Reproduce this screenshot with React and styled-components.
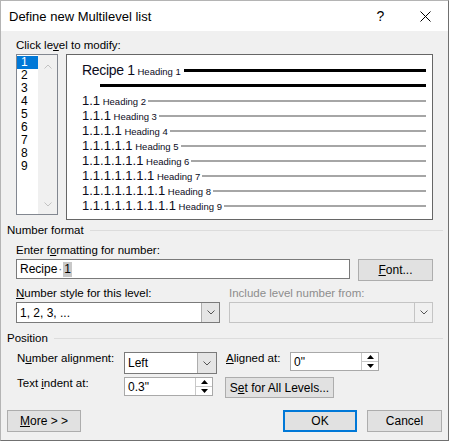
import React from "react";
import styled, { createGlobalStyle } from "styled-components";

const GlobalStyle = createGlobalStyle`
  body {
    margin: 0;
    font-family: "Liberation Sans", Arial, sans-serif;
    font-size: 11.5px;
    color: #000;
  }
`;

const levels = ["1", "2", "3", "4", "5", "6", "7", "8", "9"];

function Chevron({ down = true, color = "#555" }) {
  return (
    <svg width="8" height="5" viewBox="0 0 8 5">
      <polyline
        points={down ? "0.5,0.5 4,4 7.5,0.5" : "0.5,4.5 4,1 7.5,4.5"}
        fill="none"
        stroke={color}
        strokeWidth="1"
      />
    </svg>
  );
}

function Spin({ value, width }) {
  return (
    <SpinBox $width={width}>
      <SpinText>{value}</SpinText>
      <SpinButtons>
        <SpinHalf>
          <svg width="7" height="4" viewBox="0 0 7 4">
            <polygon points="0,4 3.5,0 7,4" fill="#000" />
          </svg>
        </SpinHalf>
        <SpinHalf>
          <svg width="7" height="4" viewBox="0 0 7 4">
            <polygon points="0,0 3.5,4 7,0" fill="#000" />
          </svg>
        </SpinHalf>
      </SpinButtons>
    </SpinBox>
  );
}

function App() {
  const rows = [];
  for (let i = 2; i <= 9; i++) {
    rows.push({ num: Array(i).fill("1").join("."), head: "Heading " + i });
  }

  return (
    <>
      <GlobalStyle />
      <Window>
        <TitleBar>
          <Title>Define new Multilevel list</Title>
          <TitleButton>?</TitleButton>
          <TitleButton>
            <svg width="11" height="11" viewBox="0 0 11 11">
              <path d="M0.5 0.5 L10.5 10.5 M10.5 0.5 L0.5 10.5" stroke="#000" strokeWidth="1" />
            </svg>
          </TitleButton>
        </TitleBar>

        <Body>
          <Label>
            Click le<u>v</u>el to modify:
          </Label>
          <TopRow>
            <ListBox>
              <Items>
                {levels.map((l, i) => (
                  <Item key={l} $selected={i === 0}>
                    {l}
                  </Item>
                ))}
              </Items>
              <ScrollTrack>
                <Chevron down={false} color="#c2c2c2" />
                <Chevron color="#c2c2c2" />
              </ScrollTrack>
            </ListBox>
            <Preview>
              <FirstRow>
                <span>
                  <BigNum>Recipe 1</BigNum>
                  <Head> Heading 1</Head>
                </span>
                <Rule $dark />
              </FirstRow>
              <SecondRow>
                <Rule $dark />
              </SecondRow>
              <Levels>
                {rows.map((r) => (
                  <LevelRow key={r.head}>
                    <span>
                      <Num>{r.num}</Num>
                      <Head> {r.head}</Head>
                    </span>
                    <Rule />
                  </LevelRow>
                ))}
              </Levels>
            </Preview>
          </TopRow>

          <GroupHeader $top={3}>
            <span>Number format</span>
            <GroupLine />
          </GroupHeader>
          <Label $top={6}>
            Enter f<u>o</u>rmatting for number:
          </Label>
          <InputRow>
            <TextInput>
              Recipe<Dot>·</Dot>
              <Field>1</Field>
            </TextInput>
            <Button $width={75} $height={22}>
              <u>F</u>ont...
            </Button>
          </InputRow>
          <StyleGrid>
            <GridLabel>
              <u>N</u>umber style for this level:
            </GridLabel>
            <GridLabel $disabled>Include level number from:</GridLabel>
            <Select $width={204}>
              <SelectText>1, 2, 3, ...</SelectText>
              <SelectArrow>
                <Chevron />
              </SelectArrow>
            </Select>
            <Select $width={204} $disabled>
              <SelectText />
              <SelectArrow $disabled>
                <Chevron />
              </SelectArrow>
            </Select>
          </StyleGrid>

          <GroupHeader $top={8}>
            <span>Position</span>
            <GroupLine />
          </GroupHeader>
          <PosRow $top={7}>
            <PosLabel $width={108}>
              N<u>u</u>mber alignment:
            </PosLabel>
            <Select $width={93} $height={22}>
              <SelectText>Left</SelectText>
              <SelectArrow $width={18}>
                <Chevron />
              </SelectArrow>
            </Select>
            <PosLabel $width={65} $left={8}>
              <u>A</u>ligned at:
            </PosLabel>
            <Spin value={'0"'} width={89} />
          </PosRow>
          <PosRow $top={3}>
            <PosLabel $width={108}>
              Text <u>i</u>ndent at:
            </PosLabel>
            <Spin value={'0.3"'} width={89} />
            <Button $width={109} $height={21} $left={12}>
              S<u>e</u>t for All Levels...
            </Button>
          </PosRow>
        </Body>

        <Footer>
          <Button $width={74} $height={22}>
            <u>M</u>ore &gt; &gt;
          </Button>
          <FooterRight>
            <Button $width={74} $height={22} $primary>
              OK
            </Button>
            <Button $width={75} $height={22}>
              Cancel
            </Button>
          </FooterRight>
        </Footer>
      </Window>
    </>
  );
}

export default App;

const Window = styled.div`
  width: 449px;
  height: 441px;
  box-sizing: border-box;
  border: 1px solid #b4b4b4;
  border-right-color: #707070;
  border-bottom-color: #707070;
  background: #f0f0f0;
  display: flex;
  flex-direction: column;
`;

const TitleBar = styled.div`
  height: 30px;
  background: #fff;
  display: flex;
  align-items: center;
  padding-left: 8px;
`;

const Title = styled.div`
  flex: 1;
  font-size: 13px;
  padding-top: 1px;
`;

const TitleButton = styled.div`
  width: 45px;
  height: 30px;
  display: flex;
  align-items: center;
  justify-content: center;
  font-size: 14px;
`;

const Body = styled.div`
  padding: 7px 5px 0 6px;
  display: flex;
  flex-direction: column;
`;

const Label = styled.div`
  height: 14px;
  line-height: 14px;
  margin-left: 9px;
  margin-top: ${(p) => p.$top || 0}px;
`;

const TopRow = styled.div`
  display: flex;
  align-items: flex-start;
  gap: 8px;
  margin: 2px 0 0 9px;
`;

const ListBox = styled.div`
  width: 42px;
  height: 161px;
  box-sizing: border-box;
  border: 1px solid #828790;
  background: #fff;
  display: flex;
`;

const Items = styled.div`
  width: 21px;
  padding-top: 1px;
`;

const Item = styled.div`
  height: 13px;
  line-height: 13px;
  padding-left: 4px;
  font-size: 12px;
  background: ${(p) => (p.$selected ? "#0078d7" : "transparent")};
  color: ${(p) => (p.$selected ? "#fff" : "#000")};
`;

const ScrollTrack = styled.div`
  flex: 1;
  background: #f0f0f0;
  display: flex;
  flex-direction: column;
  align-items: center;
  justify-content: space-between;
  padding: 9px 0 7px;
`;

const Preview = styled.div`
  width: 367px;
  height: 166px;
  box-sizing: border-box;
  border: 1px solid #666;
  background: #fff;
  padding: 5px 6px 0 15px;
  color: #0c0c1c;
`;

const FirstRow = styled.div`
  height: 20px;
  display: flex;
  align-items: center;
  white-space: nowrap;
`;

const SecondRow = styled.div`
  height: 10px;
  display: flex;
  align-items: center;
  padding-left: 15px;
`;

const Levels = styled.div`
  margin-top: 3px;
`;

const LevelRow = styled.div`
  height: 15px;
  display: flex;
  align-items: center;
  white-space: nowrap;
`;

const BigNum = styled.span`
  font-size: 14px;
  letter-spacing: -0.3px;
`;

const Num = styled.span`
  font-size: 13px;
`;

const Head = styled.span`
  font-size: 9.5px;
`;

const Rule = styled.div`
  flex: 1;
  height: ${(p) => (p.$dark ? 3 : 2)}px;
  background: ${(p) => (p.$dark ? "#000" : "#a6a6a6")};
  margin-left: ${(p) => (p.$dark ? 3 : 2)}px;
  margin-top: 1px;
`;

const GroupHeader = styled.div`
  height: 14px;
  line-height: 14px;
  display: flex;
  align-items: center;
  margin-top: ${(p) => p.$top}px;
`;

const GroupLine = styled.div`
  flex: 1;
  height: 1px;
  background: #dcdcdc;
  margin-left: 6px;
`;

const InputRow = styled.div`
  display: flex;
  align-items: flex-start;
  gap: 8px;
  margin: 2px 0 0 9px;
`;

const TextInput = styled.div`
  width: 334px;
  height: 20px;
  box-sizing: border-box;
  border: 1px solid #7a7a7a;
  background: #fff;
  display: flex;
  align-items: center;
  padding-left: 3px;
  font-size: 12px;
`;

const Dot = styled.span`
  color: #666;
  padding: 0 1px;
`;

const Field = styled.span`
  background: #c8c8c8;
  padding: 0 1px;
  line-height: 15px;
`;

const Button = styled.div`
  width: ${(p) => p.$width}px;
  height: ${(p) => p.$height}px;
  margin-left: ${(p) => p.$left || 0}px;
  box-sizing: border-box;
  background: #e1e1e1;
  border: ${(p) => (p.$primary ? "2px solid #0078d7" : "1px solid #adadad")};
  display: flex;
  align-items: center;
  justify-content: center;
  font-size: 12px;
  flex-shrink: 0;
`;

const StyleGrid = styled.div`
  display: grid;
  grid-template-columns: 204px 204px;
  column-gap: 9px;
  row-gap: 2px;
  margin: 5px 0 0 9px;
`;

const GridLabel = styled.div`
  height: 14px;
  line-height: 14px;
  color: ${(p) => (p.$disabled ? "#8d8d8d" : "#000")};
`;

const Select = styled.div`
  width: ${(p) => p.$width}px;
  height: ${(p) => p.$height || 21}px;
  box-sizing: border-box;
  border: 1px solid ${(p) => (p.$disabled ? "#c4c4c4" : "#7a7a7a")};
  background: ${(p) => (p.$disabled ? "#f0f0f0" : "#fff")};
  display: flex;
  flex-shrink: 0;
`;

const SelectText = styled.div`
  flex: 1;
  display: flex;
  align-items: center;
  padding-left: 3px;
  font-size: 12px;
`;

const SelectArrow = styled.div`
  width: ${(p) => p.$width || 17}px;
  background: ${(p) => (p.$disabled ? "#f0f0f0" : "#e5e5e5")};
  border-left: 1px solid ${(p) => (p.$disabled ? "#c4c4c4" : "#adadad")};
  display: flex;
  align-items: center;
  justify-content: center;
`;

const PosRow = styled.div`
  display: flex;
  align-items: flex-start;
  margin: ${(p) => p.$top}px 0 0 9px;
`;

const PosLabel = styled.div`
  width: ${(p) => p.$width}px;
  margin-left: ${(p) => p.$left || 0}px;
  line-height: 13px;
  flex-shrink: 0;
  padding-left: 1px;
  box-sizing: border-box;
`;

const SpinBox = styled.div`
  width: ${(p) => p.$width}px;
  height: 19px;
  box-sizing: border-box;
  border: 1px solid #a9a9a9;
  background: #fff;
  display: flex;
  flex-shrink: 0;
`;

const SpinText = styled.div`
  flex: 1;
  display: flex;
  align-items: center;
  padding-left: 3px;
  font-size: 12px;
`;

const SpinButtons = styled.div`
  width: 16px;
  border-left: 1px solid #c8c8c8;
  display: flex;
  flex-direction: column;
`;

const SpinHalf = styled.div`
  flex: 1;
  display: flex;
  align-items: center;
  justify-content: center;
  & + & {
    border-top: 1px solid #c8c8c8;
  }
`;

const Footer = styled.div`
  display: flex;
  justify-content: space-between;
  padding: 0 6px;
  margin-top: 12px;
`;

const FooterRight = styled.div`
  display: flex;
  gap: 10px;
`;
